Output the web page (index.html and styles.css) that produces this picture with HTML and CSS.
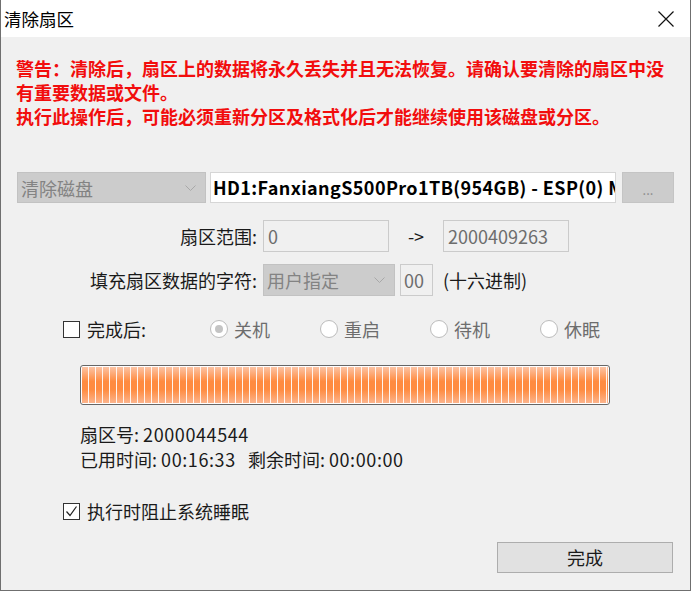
FILE: index.html
```html
<!DOCTYPE html>
<html lang="zh-CN">
<head>
  <meta charset="UTF-8">
  <title>清除扇区</title>
  <link rel="stylesheet" href="styles.css">
</head>
<body>

  <div class="window">
    <div class="titlebar">
      <span class="title">清除扇区</span>
      <svg class="close" width="16" height="16" viewBox="0 0 16 16">
        <path d="M0.5 0.5 L15.5 15.5 M15.5 0.5 L0.5 15.5" stroke="#111" stroke-width="1.2" fill="none"/>
      </svg>
    </div>

    <div class="content">
      <p class="warning">警告：清除后，扇区上的数据将永久丢失并且无法恢复。请确认要清除的扇区中没有重要数据或文件。<br>执行此操作后，可能必须重新分区及格式化后才能继续使用该磁盘或分区。</p>

      <div class="row row-disk">
        <div class="combo combo-disk">
          <span>清除磁盘</span>
          <svg class="chevron" width="11" height="6" viewBox="0 0 11 6"><path d="M0.5 0.5 L5.5 5.5 L10.5 0.5" stroke="#a8a8a8" fill="none"/></svg>
        </div>
        <div class="disk-field"><span class="disk-name">HD1:FanxiangS500Pro1TB(954GB) - ESP(0) M</span></div>
        <div class="btn-browse">...</div>
      </div>

      <div class="row row-form">
        <div class="label">扇区范围:</div>
        <div class="box box-range">0</div>
        <div class="arrow">-&gt;</div>
        <div class="box box-range">2000409263</div>
      </div>

      <div class="row row-form row-fill">
        <div class="label">填充扇区数据的字符:</div>
        <div class="combo combo-fill">
          <span>用户指定</span>
          <svg class="chevron" width="11" height="6" viewBox="0 0 11 6"><path d="M0.5 0.5 L5.5 5.5 L10.5 0.5" stroke="#a8a8a8" fill="none"/></svg>
        </div>
        <div class="box box-hex">00</div>
        <div class="hex-note">(十六进制)</div>
      </div>

      <div class="row row-after">
        <div class="check"></div>
        <span class="after-label">完成后:</span>
        <div class="radios">
          <div class="radio-item"><span class="radio checked"></span>关机</div>
          <div class="radio-item"><span class="radio"></span>重启</div>
          <div class="radio-item"><span class="radio"></span>待机</div>
          <div class="radio-item"><span class="radio"></span>休眠</div>
        </div>
      </div>

      <div class="progress">
        <div class="progress-fill" style="width: 100%;"></div>
      </div>

      <div class="status">
        <div>扇区号: <span class="num">2000044544</span></div>
        <div>已用时间: <span class="num">00:16:33</span>&nbsp;&nbsp;&nbsp;剩余时间: <span class="num">00:00:00</span></div>
      </div>

      <div class="row row-sleep">
        <div class="check">
          <svg width="15" height="15" viewBox="0 0 15 15"><path d="M2.5 7.5 L6 11.5 L12.5 2.5" stroke="#222" stroke-width="1.2" fill="none"/></svg>
        </div>
        <span class="after-label">执行时阻止系统睡眠</span>
      </div>

      <div class="footer">
        <div class="btn-done">完成</div>
      </div>
    </div>
  </div>

</body>
</html>
```

FILE: styles.css
```css
body {
  margin: 0;
  font-family: "Noto Sans CJK SC", "Noto Sans", sans-serif;
  font-size: 18px;
  color: #1a1a1a;
  background-color: #f0f0f0;
}

.window {
  width: 691px;
  height: 591px;
  box-sizing: border-box;
  border: 1px solid #6f6f6f;
  border-top: none;
  background-color: #f0f0f0;
  overflow: hidden;
}

.titlebar {
  height: 37px;
  background-color: #fff;
  display: flex;
  align-items: center;
  justify-content: space-between;
  padding: 0 16px 0 3px;
}

.title {
  font-size: 17.5px;
  color: #000;
}

.content {
  padding-left: 15px;
}

.warning {
  margin: 19px 0 0 0;
  width: 660px;
  color: #f20d0d;
  font-weight: bold;
  font-size: 18px;
  line-height: 24px;
}

.row {
  display: flex;
  align-items: center;
}

/* disk row */
.row-disk {
  margin-top: 44px;
  margin-left: 1px;
  height: 31px;
  align-items: stretch;
}

.combo {
  box-sizing: border-box;
  background-color: #cccccc;
  border: 1px solid #c2c2c2;
  color: #838383;
  display: flex;
  align-items: center;
  justify-content: space-between;
  padding: 0 9px 0 3px;
}

.combo-disk {
  width: 189px;
}

.chevron {
  flex-shrink: 0;
}

.disk-field {
  box-sizing: border-box;
  width: 406px;
  margin-left: 4px;
  background-color: #fff;
  border: 1px solid #d6d6d6;
  font-weight: bold;
  color: #000;
  white-space: nowrap;
  overflow: hidden;
  padding: 0 0 0 2px;
  line-height: 29px;
  letter-spacing: 0.4px;
}

.btn-browse {
  box-sizing: border-box;
  width: 52px;
  margin-left: 6px;
  background-color: #cccccc;
  border: 1px solid #c4c4c4;
  color: #8a8a8a;
  font-size: 13px;
  text-align: center;
  line-height: 34px;
}

/* form rows */
.row-form {
  height: 32px;
  margin-top: 17px;
  align-items: stretch;
}

.row-fill {
  margin-top: 12px;
}

.label {
  width: 241px;
  text-align: right;
  line-height: 32px;
  color: #1a1a1a;
}

.box {
  box-sizing: border-box;
  background-color: #f0f0f0;
  border: 1px solid #cbcbcb;
  color: #6d6d6d;
  padding-left: 4px;
  line-height: 30px;
}

.box-range {
  width: 126px;
  margin-left: 6px;
}

.arrow {
  width: 54px;
  text-align: center;
  line-height: 32px;
  margin-right: -6px;
}

.combo-fill {
  width: 132px;
  margin-left: 6px;
}

.box-hex {
  width: 33px;
  margin-left: 5px;
  padding-left: 3px;
}

.hex-note {
  margin-left: 10px;
  line-height: 32px;
}

/* after completion */
.row-after {
  margin-top: 21px;
  margin-left: 47px;
  height: 24px;
}

.check {
  box-sizing: border-box;
  width: 17px;
  height: 17px;
  border: 1px solid #333;
  background-color: #fff;
  display: flex;
  align-items: center;
  justify-content: center;
}

.after-label {
  margin-left: 7px;
}

.radios {
  display: flex;
  margin-left: 64px;
}

.radio-item {
  width: 110px;
  display: flex;
  align-items: center;
  color: #6d6d6d;
}

.radio {
  box-sizing: border-box;
  width: 18px;
  height: 18px;
  border: 1px solid #bcbcbc;
  border-radius: 50%;
  background-color: #fff;
  margin-right: 6px;
  display: flex;
  align-items: center;
  justify-content: center;
}

.radio.checked::after {
  content: "";
  width: 8px;
  height: 8px;
  border-radius: 50%;
  background-color: #c4c4c4;
}

/* progress */
.progress {
  box-sizing: border-box;
  width: 530px;
  height: 40px;
  margin: 24px 0 0 64px;
  border: 1px solid #666;
  border-radius: 3px;
  padding: 1px;
  background-color: #fff;
}

.progress-fill {
  height: 100%;
  background:
    repeating-linear-gradient(90deg, transparent 0 6px, #fff4ee 6px 7px),
    linear-gradient(#fcc3a4, #ff8b40 40%, #ff8b40 62%, #fcb48c);
}

.status {
  margin: 17px 0 0 64px;
  line-height: 25px;
  color: #1a1a1a;
}

.num {
  letter-spacing: 0.6px;
}

.row-sleep {
  margin-top: 27px;
  margin-left: 47px;
  height: 24px;
}

.footer {
  display: flex;
  justify-content: flex-end;
  margin-top: 19px;
  padding-right: 17px;
}

.btn-done {
  box-sizing: border-box;
  width: 176px;
  height: 31px;
  background-color: #e1e1e1;
  border: 1px solid #adadad;
  text-align: center;
  line-height: 29px;
  color: #1a1a1a;
}
```
